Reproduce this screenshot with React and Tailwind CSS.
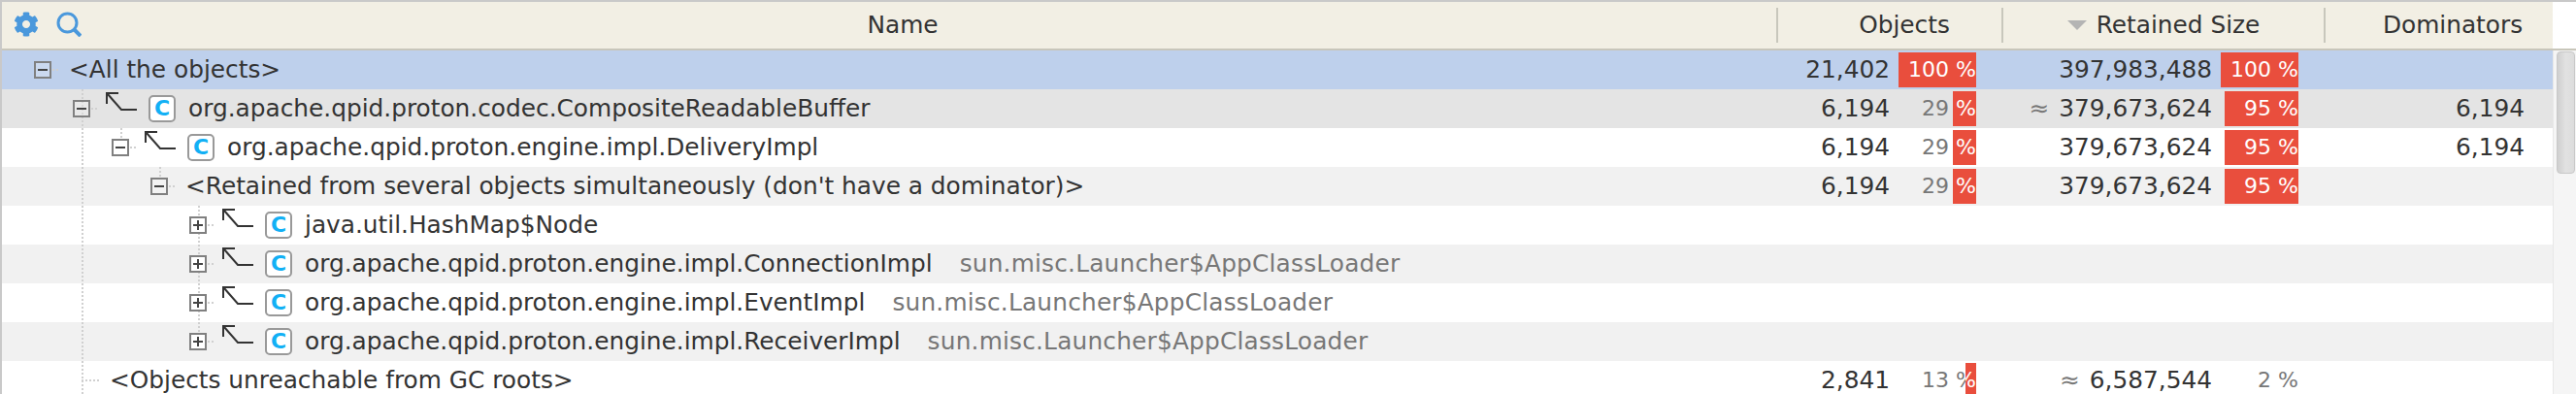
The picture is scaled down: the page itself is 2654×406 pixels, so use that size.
import React from 'react';
import { FaCog } from 'react-icons/fa';

const rowGrid = 'grid grid-cols-[1828px_232px_332px_236px] h-10 shrink-0 relative';
const dotsV = 'absolute w-[2px] bg-[repeating-linear-gradient(to_bottom,#d0d0d0_0_2px,transparent_2px_4px)]';
const dotsH = 'h-[2px] bg-[repeating-linear-gradient(to_right,#d0d0d0_0_2px,transparent_2px_4px)]';

const indent = ['pl-[33px]', 'pl-[73px]', 'pl-[113px]', 'pl-[153px]', 'pl-[193px]'];

function Expander({ open }) {
  return (
    <span className={`relative flex items-center justify-center w-[18px] h-[18px] shrink-0 border-2 border-[#808080] ${open ? 'bg-white/20' : 'bg-white'}`}>
      <span className="block w-[10px] h-[2px] bg-[#444]" />
      {!open && <span className="absolute block w-[2px] h-[10px] bg-[#444]" />}
    </span>
  );
}

function RefArrow() {
  return (
    <svg width="34" height="20" viewBox="0 0 34 20" className="shrink-0 self-start mt-[3px] ml-[7px] text-[#333]" fill="none" stroke="currentColor" strokeWidth="2">
      <path d="M2 2 L16 18 L32 18" />
      <path d="M1 12 L1 1 L13 1" />
    </svg>
  );
}

function ClassBadge() {
  return (
    <span className="flex items-center justify-center w-7 h-7 ml-[10px] shrink-0 rounded-[5px] border-2 border-[#999] bg-white text-[#12b0f5] text-[22px] font-bold leading-none">
      C
    </span>
  );
}

function Percent({ value }) {
  const label = `${value} %`;
  return (
    <span className="relative block w-20 h-9 text-[22px] leading-9 text-right text-[#777] whitespace-nowrap">
      {label}
      <span className="absolute inset-y-0 right-0 overflow-hidden bg-[#e94e3d] text-white" style={{ width: `${value <= 2 ? 0 : Math.max(Math.ceil(value * 0.8), 10)}px` }}>
        <span className="absolute right-0 top-0">{label}</span>
      </span>
    </span>
  );
}

function Row({ row }) {
  return (
    <div className={`${rowGrid} ${row.bg}`}>
      {row.guides?.map((g) => (
        <span key={g} className={`${dotsV} ${g}`} />
      ))}
      <div className={`flex items-center whitespace-nowrap overflow-hidden ${indent[row.depth]}`}>
        {row.open !== undefined ? <Expander open={row.open} /> : <span className="w-[18px] shrink-0" />}
        {row.open !== undefined ? <span className={`${dotsH} w-2 ml-[1px] shrink-0`} /> : <span className={`${dotsH} w-5 -ml-[9px] shrink-0`} />}
        {row.ref && <RefArrow />}
        {row.ref && <ClassBadge />}
        <span className={row.ref ? 'ml-[13px]' : 'ml-[9px]'}>{row.name}</span>
        {row.loader && <span className="ml-[28px] tracking-[0.2px] text-[#777]">{row.loader}</span>}
      </div>
      <div className="flex items-center justify-end gap-[9px] pr-[26px]">
        {row.objects && <span>{row.objects}</span>}
        {row.objects && <Percent value={row.objPct} />}
      </div>
      <div className="flex items-center justify-end pr-[26px]">
        {row.approx && <span className="mr-[10px] text-[#777]">≈</span>}
        {row.size && <span className="mr-[9px]">{row.size}</span>}
        {row.size && <Percent value={row.sizePct} />}
      </div>
      <div className="flex items-center justify-end pr-[29px]">{row.dominators}</div>
    </div>
  );
}

const loader = 'sun.misc.Launcher$AppClassLoader';

const rows = [
  { depth: 0, open: true, bg: 'bg-[#bed0ec]', name: '<All the objects>', objects: '21,402', objPct: 100, size: '397,983,488', sizePct: 100 },
  { depth: 1, open: true, bg: 'bg-[#e4e4e4]', ref: true, name: 'org.apache.qpid.proton.codec.CompositeReadableBuffer', objects: '6,194', objPct: 29, approx: true, size: '379,673,624', sizePct: 95, dominators: '6,194', guides: ['left-[82px] inset-y-0'] },
  { depth: 2, open: true, bg: 'bg-white', ref: true, name: 'org.apache.qpid.proton.engine.impl.DeliveryImpl', objects: '6,194', objPct: 29, size: '379,673,624', sizePct: 95, dominators: '6,194', guides: ['left-[82px] inset-y-0', 'left-[122px] top-0 h-[12px]'] },
  { depth: 3, open: true, bg: 'bg-[#f1f1f1]', name: "<Retained from several objects simultaneously (don't have a dominator)>", objects: '6,194', objPct: 29, size: '379,673,624', sizePct: 95, guides: ['left-[82px] inset-y-0', 'left-[162px] top-0 h-[12px]'] },
  { depth: 4, open: false, bg: 'bg-white', ref: true, name: 'java.util.HashMap$Node', guides: ['left-[82px] inset-y-0', 'left-[202px] inset-y-0'] },
  { depth: 4, open: false, bg: 'bg-[#f1f1f1]', ref: true, name: 'org.apache.qpid.proton.engine.impl.ConnectionImpl', loader, guides: ['left-[82px] inset-y-0', 'left-[202px] inset-y-0'] },
  { depth: 4, open: false, bg: 'bg-white', ref: true, name: 'org.apache.qpid.proton.engine.impl.EventImpl', loader, guides: ['left-[82px] inset-y-0', 'left-[202px] inset-y-0'] },
  { depth: 4, open: false, bg: 'bg-[#f1f1f1]', ref: true, name: 'org.apache.qpid.proton.engine.impl.ReceiverImpl', loader, guides: ['left-[82px] inset-y-0', 'left-[202px] top-0 h-[20px]'] },
  { depth: 1, bg: 'bg-white', name: '<Objects unreachable from GC roots>', objects: '2,841', objPct: 13, approx: true, size: '6,587,544', sizePct: 2, guides: ['left-[82px] inset-y-0'] },
];

export default function App() {
  return (
    <div className="h-[406px] w-[2654px] overflow-hidden bg-white border-t-2 border-[#c9c9c9] font-['DejaVu_Sans',sans-serif] text-[24.8px] text-[#333] flex">
      <div className="w-[2630px] shrink-0 border-l-2 border-[#c9c9c9] flex flex-col">
        <div className="grid grid-cols-[1828px_232px_332px_236px] h-[50px] shrink-0 items-center bg-[#f2efe4] border-b-2 border-[#c8c6ba]">
          <div className="relative flex items-center justify-center h-full">
            <div className="absolute left-[12px] top-[10px] flex items-center gap-[18px] text-[#4a98dc]">
              <FaCog size={26} />
              <svg width="26" height="26" viewBox="0 0 26 26" fill="none" stroke="currentColor">
                <circle cx="11.5" cy="11.5" r="9.5" strokeWidth="3" />
                <path d="M18 18 L25 25" strokeWidth="4" />
              </svg>
            </div>
            <span className="pl-[28px]">Name</span>
          </div>
          <div className="h-9 flex items-center justify-center border-l-2 border-[#c8c7bc] pl-[30px]">Objects</div>
          <div className="h-9 flex items-center justify-center gap-[10px] border-l-2 border-[#c8c7bc]">
            <span className="w-0 h-0 border-x-[10px] border-x-transparent border-t-[10px] border-t-[#b4b4b4]" />
            Retained Size
          </div>
          <div className="h-9 flex items-center justify-center border-l-2 border-[#c8c7bc] pl-[28px]">Dominators</div>
        </div>
        {rows.map((row) => (
          <Row key={row.name} row={row} />
        ))}
      </div>
      <div className="flex-1 flex flex-col">
        <div className="h-[50px] shrink-0 border-b-2 border-[#c8c6ba]" />
        <div className="flex-1 bg-[#f5f5f5] border-l border-[#e8e8e8] pl-[3px] pr-[1px] pt-[1px]">
          <div className="h-[126px] rounded-[4px] border border-[#c8c8c8] bg-gradient-to-r from-[#cfcfcf] via-[#e2e2e2] to-[#dcdcdc]" />
        </div>
      </div>
    </div>
  );
}
